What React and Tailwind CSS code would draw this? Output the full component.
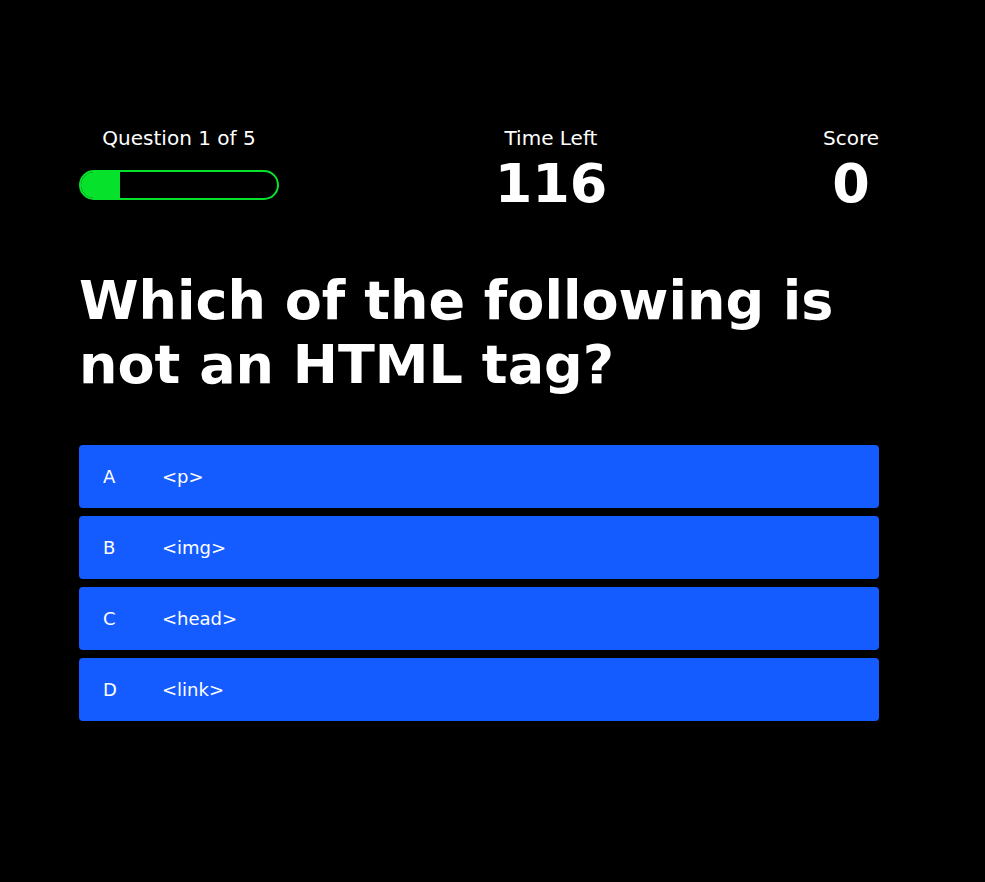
export default function App() {
  const answers = [
    { key: "A", text: "<p>" },
    { key: "B", text: "<img>" },
    { key: "C", text: "<head>" },
    { key: "D", text: "<link>" },
  ];

  return (
    <div className="min-h-[882px] bg-black text-white font-['DejaVu_Sans',sans-serif]">
      <div className="w-[800px] ml-[79px] pt-[126px]">
        <div className="flex justify-between items-start">
          <div className="w-[200px] flex flex-col items-center">
            <div className="text-[20px] leading-[24px]">Question 1 of 5</div>
            <div className="mt-[20px] w-[200px] h-[30px] rounded-full border-2 border-[#06e12c] overflow-hidden">
              <div className="h-full w-[20%] bg-[#06e12c]"></div>
            </div>
          </div>
          <div className="flex flex-col items-center">
            <div className="text-[20px] leading-[24px]">Time Left</div>
            <div className="mt-[6px] text-[54px] leading-[56px] font-bold">116</div>
          </div>
          <div className="flex flex-col items-center">
            <div className="text-[20px] leading-[24px]">Score</div>
            <div className="mt-[6px] text-[54px] leading-[56px] font-bold">0</div>
          </div>
        </div>

        <h1 className="mt-[57px] text-[54px] leading-[64px] font-bold">
          Which of the following is not an HTML tag?
        </h1>

        <div className="mt-[48px] flex flex-col gap-[8px]">
          {answers.map((a) => (
            <button
              key={a.key}
              className="h-[63px] w-full rounded bg-[#145cff] flex items-center pl-[24px] text-[18px] text-left"
            >
              <span className="w-[59px]">{a.key}</span>
              <span>{a.text}</span>
            </button>
          ))}
        </div>
      </div>
    </div>
  );
}
